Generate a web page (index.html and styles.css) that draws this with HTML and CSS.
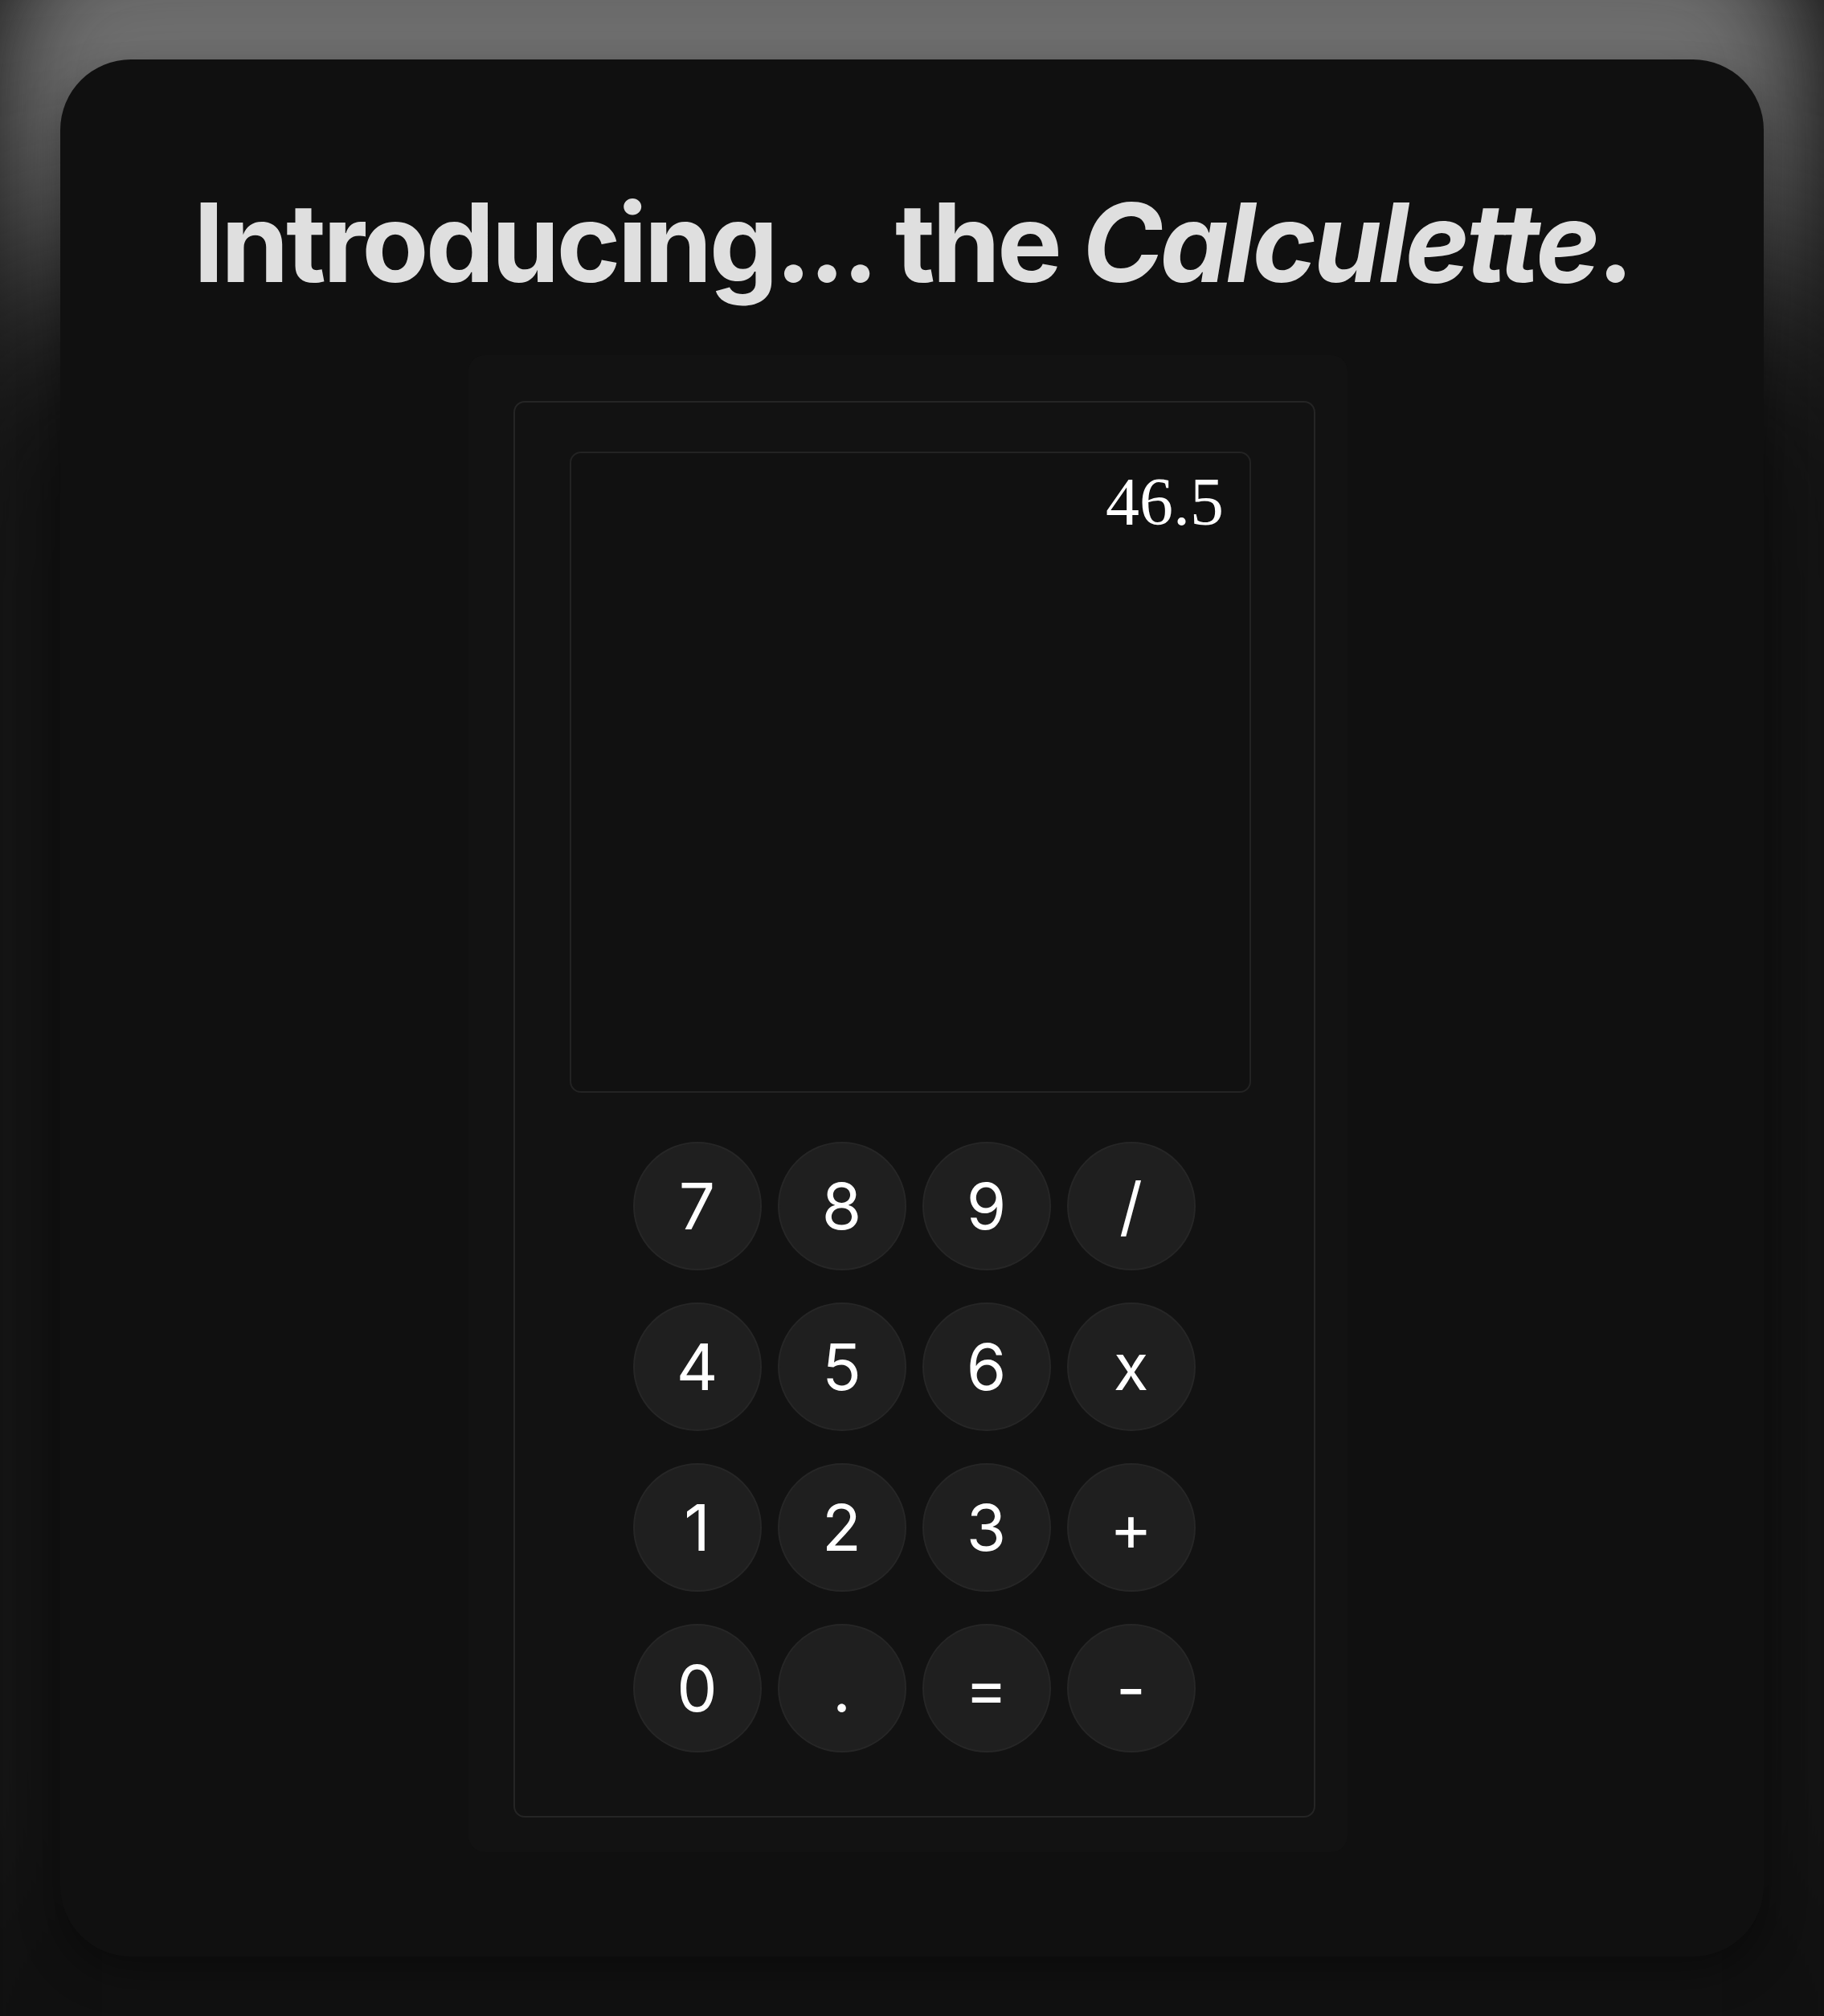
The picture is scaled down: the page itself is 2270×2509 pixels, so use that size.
FILE: index.html
```html
<!DOCTYPE html>
<html lang="en">
<head>
<meta charset="utf-8">
<title>Calculette</title>
<link rel="stylesheet" href="styles.css">
</head>
<body>
<main class="card">
  <h1 class="title">Introducing... the <em>Calculette</em>.</h1>
  <div class="stage">
    <div class="shell">
      <div class="frame">
        <div class="display"><span class="readout">46.5</span></div>
        <div class="keys">
          <button class="key">7</button>
          <button class="key">8</button>
          <button class="key">9</button>
          <button class="key">/</button>
          <button class="key">4</button>
          <button class="key">5</button>
          <button class="key">6</button>
          <button class="key">x</button>
          <button class="key">1</button>
          <button class="key">2</button>
          <button class="key">3</button>
          <button class="key">+</button>
          <button class="key">0</button>
          <button class="key">.</button>
          <button class="key">=</button>
          <button class="key">-</button>
        </div>
      </div>
    </div>
  </div>
</main>
</body>
</html>
```

FILE: styles.css
```css
html, body {
  margin: 0;
  padding: 0;
}

body {
  background: #111111;
  min-height: 2509px;
  overflow: hidden;
  font-family: Inter, "Liberation Sans", sans-serif;
}

.card {
  margin: 74px 75px 0;
  height: 2361px;
  box-sizing: border-box;
  padding-top: 146px;
  background: #101010;
  border-radius: 88px;
  box-shadow:
    0 20px 50px rgba(0, 0, 0, 0.35),
    0 476px 240px 250px #111111,
    -12px -100px 130px 70px #707070;
}

.title {
  margin: 0;
  text-align: center;
  font-family: Inter, "Liberation Sans", sans-serif;
  font-weight: 700;
  font-size: 136px;
  line-height: 163px;
  letter-spacing: -0.028em;
  color: #dfdfdf;
}

.title em {
  font-style: italic;
}

.stage {
  display: flex;
  justify-content: center;
  padding-right: 10px;
  margin-top: 59px;
}

.shell {
  padding: 57px 40px 43px 56px;
  background: #121212;
  border-radius: 20px;
}

.frame {
  width: 998px;
  box-sizing: border-box;
  border: 2px solid #252525;
  border-radius: 14px;
  background: #121212;
  padding: 61px 78px 79px 68px;
}

.display {
  height: 798px;
  box-sizing: border-box;
  border: 2px solid #232323;
  border-radius: 14px;
  background: #111111;
  padding: 12px 32px;
  text-align: right;
  font-family: "Liberation Serif", serif;
  font-size: 84px;
  line-height: normal;
  color: #ffffff;
}

.keys {
  display: grid;
  grid-template-columns: repeat(4, 160px);
  grid-auto-rows: 160px;
  column-gap: 20px;
  row-gap: 40px;
  justify-content: center;
  margin-top: 61px;
  padding-left: 9px;
}

.key {
  width: 160px;
  height: 160px;
  box-sizing: border-box;
  border-radius: 50%;
  background: #1f1f1f;
  border: 2px solid #262626;
  color: #ffffff;
  font-family: Inter, "Liberation Sans", sans-serif;
  font-weight: 400;
  font-size: 80px;
  line-height: 1;
  display: flex;
  align-items: center;
  justify-content: center;
  padding: 0;
}
```
